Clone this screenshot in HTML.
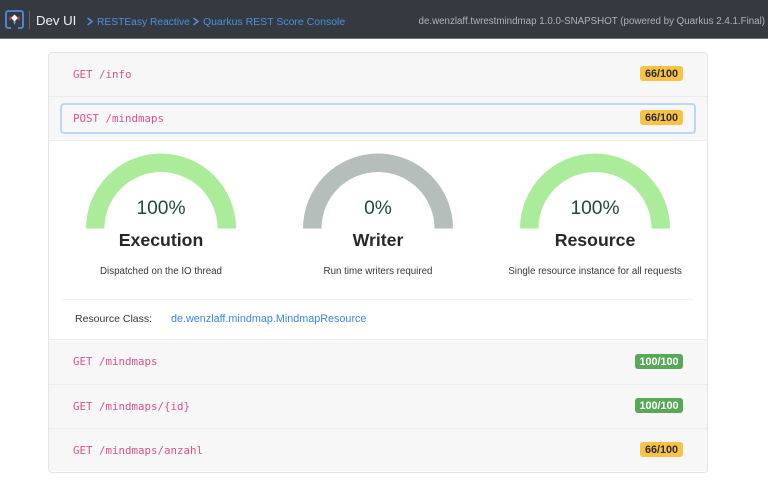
<!DOCTYPE html>
<html>
<head>
<meta charset="utf-8">
<style>
html,body{margin:0;padding:0;background:#fff;}
body{width:768px;height:495px;position:relative;overflow:hidden;font-family:"Liberation Sans",sans-serif;color:#212529;}
.a{position:absolute;white-space:nowrap;}
#nav{left:0;top:0;width:768px;height:38px;background:#343a40;border-bottom:1px solid #6c7075;}
#card{left:48px;top:52px;width:658px;height:419px;background:#fff;border:1px solid #e5e5e5;border-radius:4px;}
.row{background:#f7f7f7;left:49px;width:658px;}
.line{background:#ececec;left:49px;width:658px;height:1px;}
.code{font-family:"DejaVu Sans Mono","Liberation Mono",monospace;font-size:10.8px;color:#e0508f;line-height:14px;left:73px;}
.badge{height:15px;line-height:16px;border-radius:3px;font-size:10.8px;font-weight:bold;text-align:center;}
.y{background:#f8c245;color:#2b2a26;left:640px;width:43px;}
.g{background:#57a957;color:#fff;left:635px;width:48px;}
.pct{font-size:19.2px;color:#1f4a3c;text-align:center;width:150px;line-height:24px;top:197px;}
.ttl{font-size:17.7px;font-weight:bold;color:#26292c;text-align:center;width:200px;line-height:24px;top:228px;}
.sub{font-size:9.75px;color:#33373a;text-align:center;width:240px;line-height:14px;top:265px;}
</style>
</head>
<body>
<div class="a" id="nav"></div>
<svg class="a" style="left:5px;top:10px" width="20" height="20" viewBox="0 0 20 20">
<path d="M6 18H3.500Q1 18 1 15.500V3.500Q1 1 3.500 1H15.500Q18 1 18 3.500V15.500Q18 18 15.500 18H13" fill="none" stroke="#4a8fe0" stroke-width="1.800"/>
<path d="M9.500 4.500L13 8L9.500 11.500L6 8Z" fill="#fff"/>
<path d="M4.500 6L7 8.500L4.500 11Z" fill="#e04040"/>
<path d="M14.500 6L12 8.500L14.500 11Z" fill="#e04040"/>
<path d="M8 11.500H11L9.500 15Z" fill="#5b9be8"/>
</svg>
<div class="a" style="left:29px;top:11px;width:1px;height:18px;background:#5e6469"></div>
<div class="a" style="left:36px;top:12px;font-size:13.2px;line-height:17px;color:#f2f2f2">Dev UI</div>
<svg class="a" style="left:86px;top:17px" width="10" height="10" viewBox="0 0 10 10"><path d="M1.500 1L6 4.500L1.500 8" fill="none" stroke="#4f8fdc" stroke-width="1.500"/></svg>
<div class="a" style="left:97px;top:16px;font-size:10.25px;line-height:14px;color:#4f8fdc">RESTEasy Reactive</div>
<svg class="a" style="left:192px;top:17px" width="10" height="10" viewBox="0 0 10 10"><path d="M1.500 1L6 4.500L1.500 8" fill="none" stroke="#4f8fdc" stroke-width="1.500"/></svg>
<div class="a" style="left:203px;top:15px;font-size:10.5px;line-height:14px;color:#4f8fdc">Quarkus REST Score Console</div>
<div class="a" style="right:3px;top:15px;font-size:9.75px;line-height:14px;color:#b0b3b5">de.wenzlaff.twrestmindmap 1.0.0-SNAPSHOT (powered by Quarkus 2.4.1.Final)</div>

<div class="a" id="card"></div>
<div class="a row" style="top:53px;height:87px;border-radius:3px 3px 0 0;width:658px"></div>
<div class="a line" style="top:96px"></div>
<div class="a" style="left:60px;top:103px;width:632px;height:27px;border:2px solid #bcd6f5;border-radius:4px;background:#f7f7f7"></div>
<div class="a line" style="top:140px"></div>
<div class="a code" style="top:68px">GET /info</div>
<div class="a code" style="top:112px">POST /mindmaps</div>
<div class="a badge y" style="top:66px">66/100</div>
<div class="a badge y" style="top:110px">66/100</div>

<svg class="a" style="left:0;top:140px" width="768" height="100" viewBox="0 140 768 100">
<path d="M86 228.500A75 75 0 0 1 236 228.500H217.500A56.500 56.500 0 0 0 104.500 228.500Z" fill="#abec9b"/>
<path d="M303 228.500A75 75 0 0 1 453 228.500H434.500A56.500 56.500 0 0 0 321.500 228.500Z" fill="#b6bebc"/>
<path d="M520 228.500A75 75 0 0 1 670 228.500H651.500A56.500 56.500 0 0 0 538.500 228.500Z" fill="#abec9b"/>
</svg>
<div class="a pct" style="left:86px">100%</div>
<div class="a pct" style="left:303px">0%</div>
<div class="a pct" style="left:520px">100%</div>
<div class="a ttl" style="left:61px">Execution</div>
<div class="a ttl" style="left:278px">Writer</div>
<div class="a ttl" style="left:495px">Resource</div>
<div class="a sub" style="left:41px">Dispatched on the IO thread</div>
<div class="a sub" style="left:258px">Run time writers required</div>
<div class="a sub" style="left:475px">Single resource instance for all requests</div>
<div class="a" style="left:62px;top:299px;width:632px;height:1px;background:#f1f1f1"></div>
<div class="a" style="left:75px;top:312px;font-size:10.5px;line-height:14px;color:#33373a">Resource Class:</div>
<div class="a" style="left:171px;top:312px;font-size:10.8px;line-height:14px;color:#3d85f0">de.wenzlaff.mindmap.MindmapResource</div>

<div class="a row" style="top:340px;height:131px;border-radius:0 0 3px 3px;width:658px"></div>
<div class="a line" style="top:339px"></div>
<div class="a line" style="top:384px"></div>
<div class="a line" style="top:428px"></div>
<div class="a code" style="top:355px">GET /mindmaps</div>
<div class="a code" style="top:400px">GET /mindmaps/{id}</div>
<div class="a code" style="top:444px">GET /mindmaps/anzahl</div>
<div class="a badge g" style="top:354px">100/100</div>
<div class="a badge g" style="top:398px">100/100</div>
<div class="a badge y" style="top:442px">66/100</div>
</body>
</html>
